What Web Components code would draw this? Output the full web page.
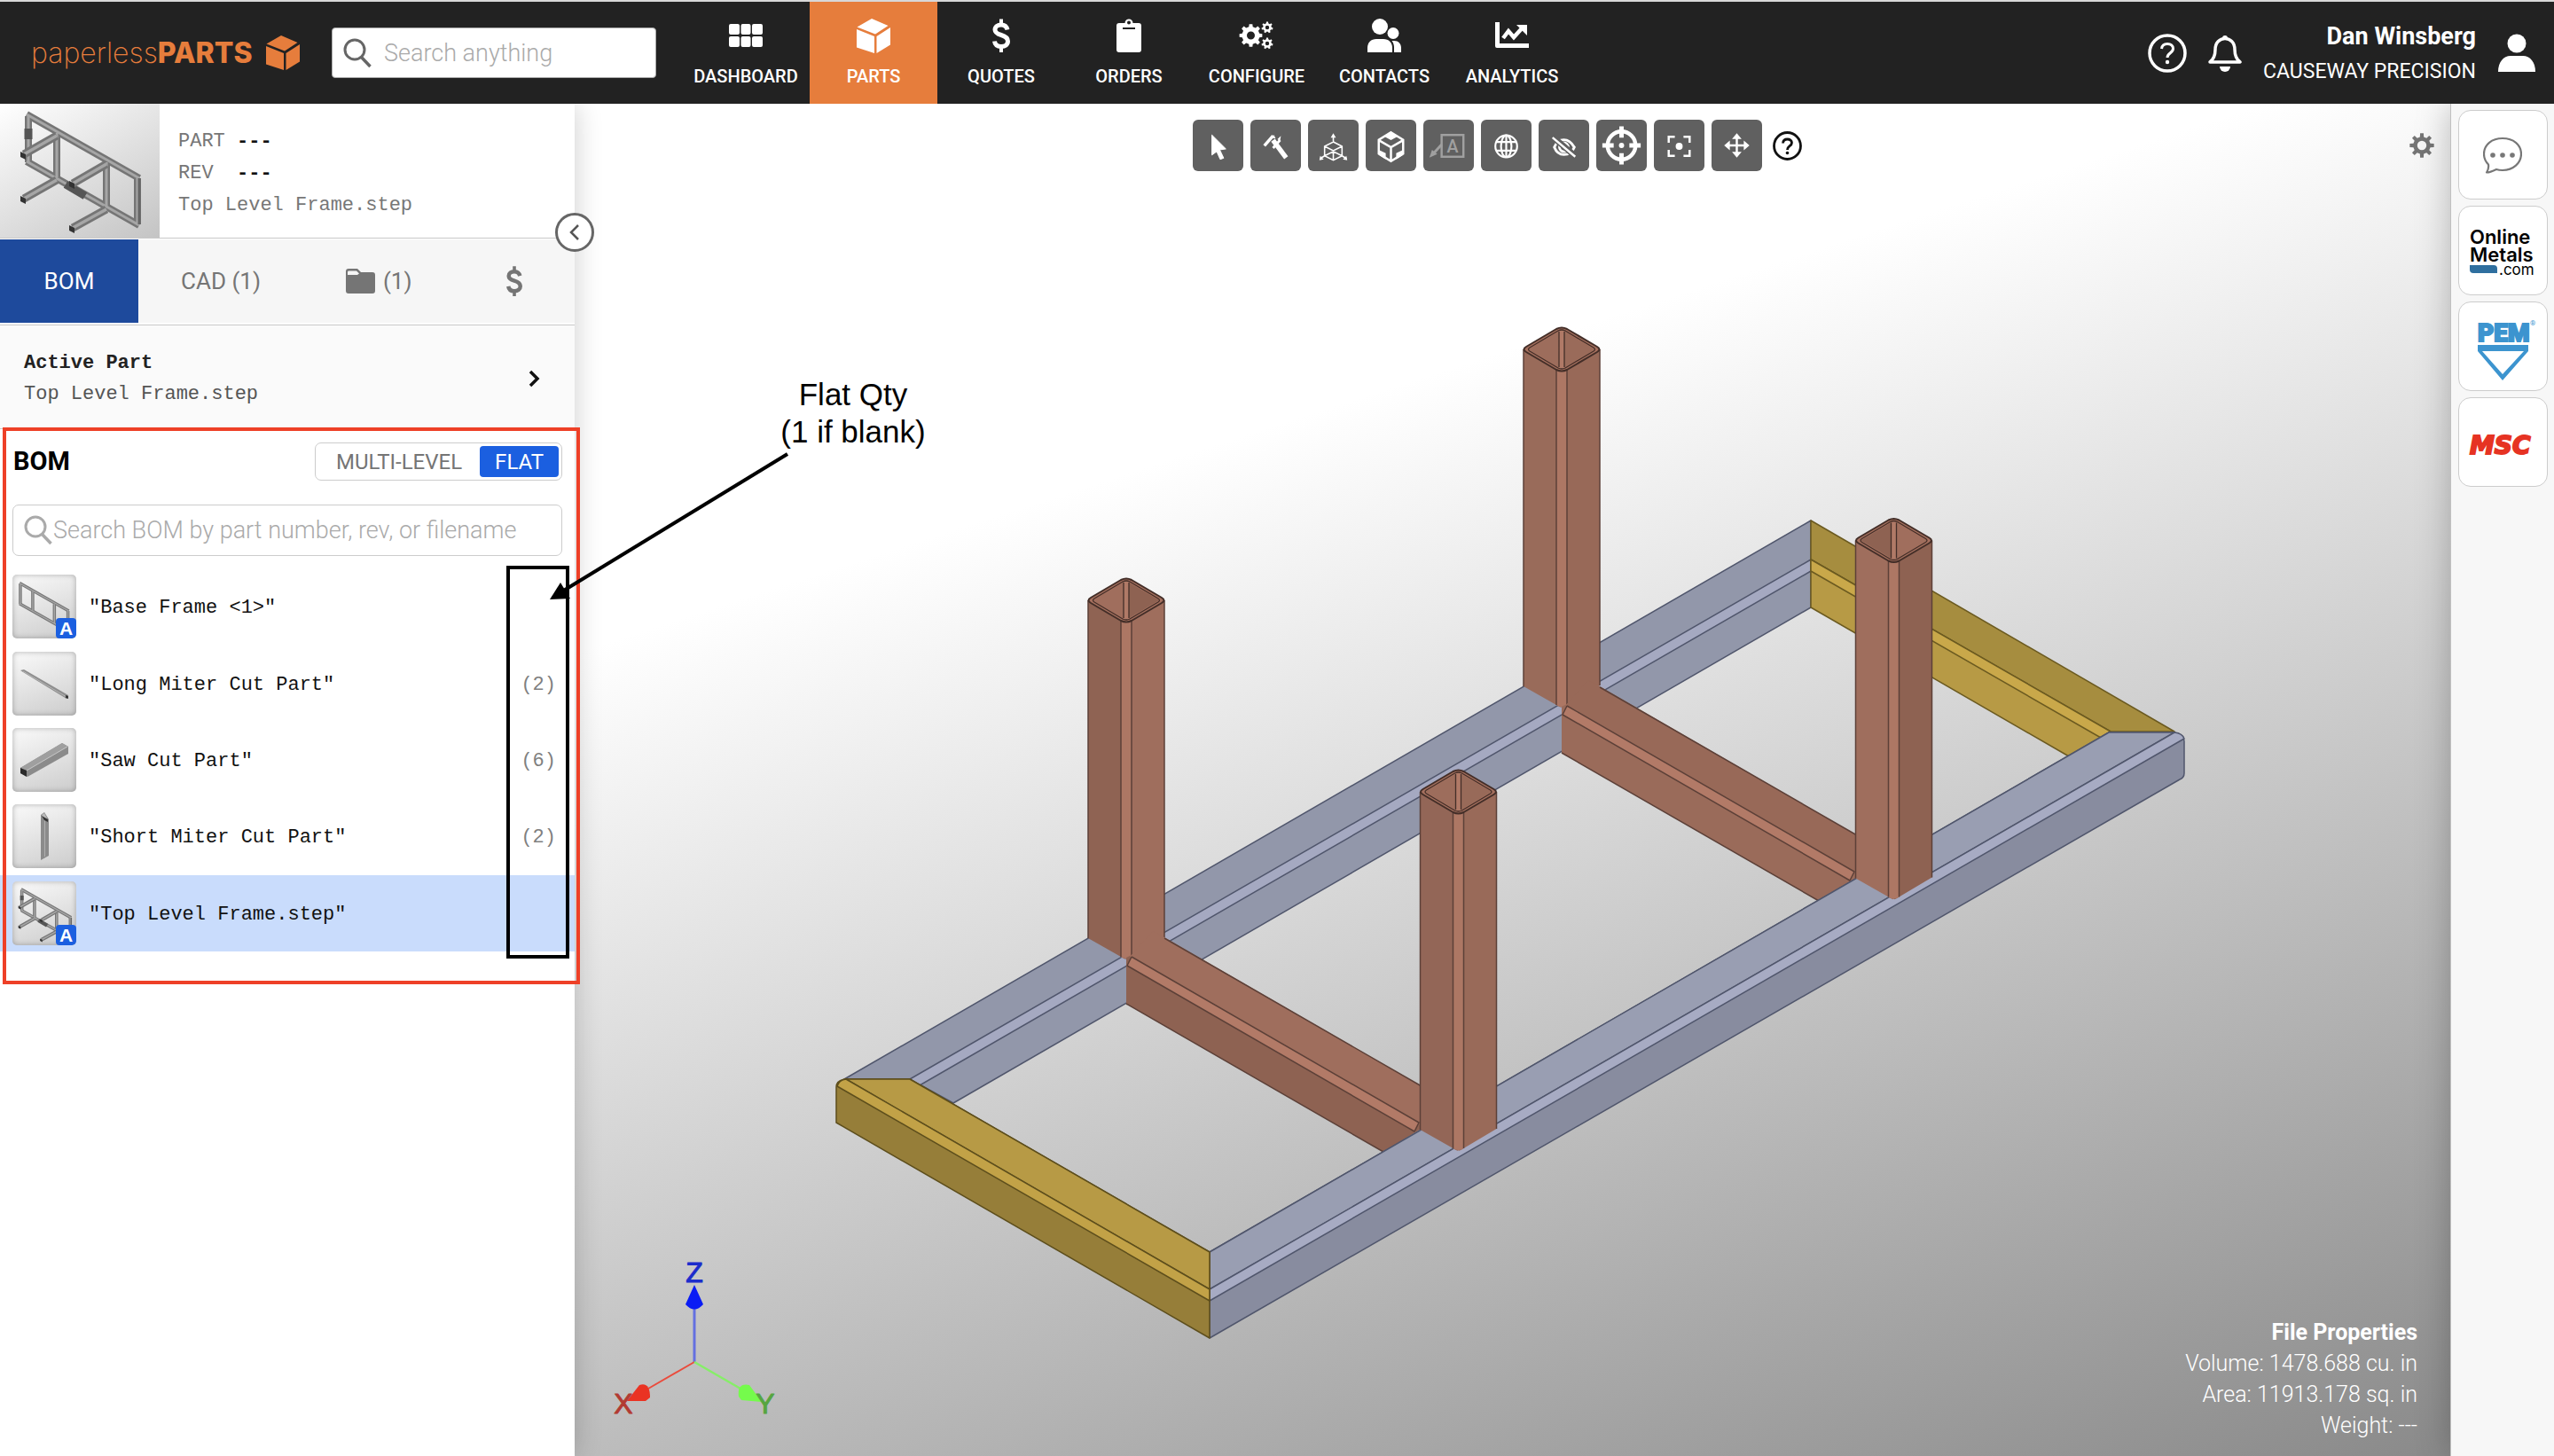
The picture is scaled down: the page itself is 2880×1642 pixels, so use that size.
<!DOCTYPE html>
<html lang="en">
<head>
<meta charset="utf-8">
<title>Paperless Parts</title>
<style>
html,body{margin:0;padding:0;height:100%}
body{font-family:Roboto,"Liberation Sans",sans-serif;font-size:26px;color:#222;background:#fff;overflow:hidden}
</style>
</head>
<body>
<pp-app></pp-app>
<script>
const base = `*{box-sizing:border-box}button,input{font:inherit;color:inherit;margin:0;border:0;padding:0;background:none}a{color:inherit;text-decoration:none}svg{display:block}`;
function define(name, html, setup) {
  const t = document.createElement('template');
  customElements.define(name, class extends HTMLElement {
    connectedCallback() {
      if (this.shadowRoot) return;
      t.innerHTML = `<style>${base}</style>` + (typeof html === 'function' ? html(this) : html);
      this.attachShadow({mode: 'open'}).append(t.content.cloneNode(true));
      if (setup) setup(this);
    }
  });
}
function gear(cx, cy, ro, ri, hole, n) {
  let d = '';
  const step = Math.PI * 2 / n;
  const p = (r, a) => (cx + r * Math.sin(a)).toFixed(2) + ' ' + (cy - r * Math.cos(a)).toFixed(2);
  for (let i = 0; i < n; i++) {
    const a = i * step;
    d += (i ? 'L' : 'M') + p(ri, a - step * .28) + 'L' + p(ro, a - step * .18) + 'L' + p(ro, a + step * .18) + 'L' + p(ri, a + step * .28);
  }
  return `<path fill-rule="evenodd" d="${d}ZM${cx - hole} ${cy}a${hole} ${hole} 0 1 0 ${2 * hole} 0a${hole} ${hole} 0 1 0 ${-2 * hole} 0Z"/>`;
}
const box = '<path d="M1.500 10.500 18 1l18.500 8L22 18.500zM1 13l20 8v19L1 33.500zM39 11v19.500L23.500 40V21z"/>';
const dollar = '<path d="M27 13.500C26 9.500 23.500 8 20 8c-4 0-7 2-7 5.500C13 17 16 18.300 20 19.500s7.500 3 7.500 7c0 3.800-3 6-7.500 6-4.200 0-7-2-7.500-6" fill="none" stroke="currentColor" stroke-width="5"/><path d="M18 1.500h4v8h-4zM18 31h4v8h-4z"/>';
const icons = {
  dashboard: '<path d="M3 7h8a2 2 0 0 1 2 2v8a2 2 0 0 1-2 2H3a2 2 0 0 1-2-2V9a2 2 0 0 1 2-2zm13.500 0h7a2 2 0 0 1 2 2v8a2 2 0 0 1-2 2h-7a2 2 0 0 1-2-2V9a2 2 0 0 1 2-2zm12.500 0h8a2 2 0 0 1 2 2v8a2 2 0 0 1-2 2h-8a2 2 0 0 1-2-2V9a2 2 0 0 1 2-2zM3 21h8a2 2 0 0 1 2 2v8a2 2 0 0 1-2 2H3a2 2 0 0 1-2-2v-8a2 2 0 0 1 2-2zm13.500 0h7a2 2 0 0 1 2 2v8a2 2 0 0 1-2 2h-7a2 2 0 0 1-2-2v-8a2 2 0 0 1 2-2zM29 21h8a2 2 0 0 1 2 2v8a2 2 0 0 1-2 2h-8a2 2 0 0 1-2-2v-8a2 2 0 0 1 2-2z"/>',
  parts: box,
  quotes: dollar,
  orders: '<path fill-rule="evenodd" d="M9 6h6.500a4.500 4.500 0 0 1 9 0H31a3 3 0 0 1 3 3v27a3 3 0 0 1-3 3H9a3 3 0 0 1-3-3V9a3 3 0 0 1 3-3zm4 5v2h14v-2zM20 3.500a2 2 0 1 0 0 4 2 2 0 0 0 0-4z"/>',
  configure: gear(13.5, 20, 13, 10, 4.5, 8) + gear(32, 11, 6.5, 4.8, 2.2, 7) + gear(32, 29, 6.5, 4.8, 2.2, 7),
  contacts: '<ellipse cx="15" cy="10" rx="9" ry="9"/><path d="M1 39v-5c0-6 4-10 10-10h8c6 0 10 4 10 10v5z"/><circle cx="30" cy="17.500" r="6.500"/><path d="M31 39v-6c0-2.500-1-5-2.500-7H31c5 0 8 3.500 8 8v5z"/>',
  analytics: '<path d="M1 5h5v24h33v5H3a2 2 0 0 1-2-2z"/><path d="m10 23 6-8 6 7 10-11" fill="none" stroke="currentColor" stroke-width="4.500"/><path d="M25 8h12v12z"/>'
};
const search = c => `<svg width="32" height="34" viewBox="0 0 32 34" fill="none" stroke="${c}" stroke-width="3"><circle cx="13" cy="13" r="11"/><path d="m20.500 21.500 10 10.500" stroke-width="3.500"/></svg>`;

define('pp-nav-item', el => `<style>
:host{display:block;width:144px}
a{display:flex;flex-direction:column;align-items:center;gap:14px;height:115px;padding-top:18px;color:#fff;font-size:20px;line-height:24px;font-weight:500}
:host([active]) a{background:#e67d3c}
</style><a href="#${el.getAttribute('icon')}"><svg width="40" height="40" viewBox="0 0 40 40" fill="currentColor" aria-hidden="true">${icons[el.getAttribute('icon')]}</svg><slot></slot></a>`);

define('pp-header', `<style>
:host{display:flex;align-items:center;background:#222;border-top:2px solid #d8d8d8;height:117px;color:#fff;padding:0 20px 0 35px}
.logo{display:flex;align-items:center;justify-content:space-between;color:#e67d3c;font-family:Inter,sans-serif;font-size:32px;line-height:40px;font-weight:200;width:304px}
.logo b{font-weight:800}
.logo .word{white-space:nowrap}
label{display:flex;align-items:center;gap:14px;width:366px;height:57px;margin-left:35px;background:#fff;border:1px solid #aaa;border-radius:4px;padding:0 12px}
input{flex:1;min-width:0;font-size:27px;font-weight:300;outline:0;color:#333}
input::placeholder{color:#aaa;opacity:1}
nav{display:flex;margin-left:29px;flex:1}
.user{display:flex;align-items:center;gap:24px}
.who{text-align:right;display:flex;flex-direction:column;font-size:23px;line-height:40px;padding-top:3px}
.who b{font-size:27px;font-weight:700}
</style>
<a class="logo" href="#home"><span class="word">paperless<b>PARTS</b></span><svg width="40" height="41" viewBox="0 0 40 41" fill="currentColor">${box}</svg></a>
<label aria-label="Search anything">${search('#666')}<input type="search" placeholder="Search anything"></label>
<nav><pp-nav-item icon="dashboard">DASHBOARD</pp-nav-item><pp-nav-item icon="parts" active>PARTS</pp-nav-item><pp-nav-item icon="quotes">QUOTES</pp-nav-item><pp-nav-item icon="orders">ORDERS</pp-nav-item><pp-nav-item icon="configure">CONFIGURE</pp-nav-item><pp-nav-item icon="contacts">CONTACTS</pp-nav-item><pp-nav-item icon="analytics">ANALYTICS</pp-nav-item></nav>
<div class="user">
<button aria-label="Help"><svg width="44" height="44" viewBox="0 0 44 44" fill="none" stroke="#fff" stroke-width="3.500"><circle cx="22" cy="22" r="20"/><path d="M15.500 17c.5-4 3-5.500 6.500-5.500 4 0 6.500 2.200 6.500 5.300 0 5.200-6.500 4.700-6.500 10.200" stroke-width="3"/><circle cx="22" cy="32" r="2.200" fill="#fff" stroke="none"/></svg></button>
<button aria-label="Notifications"><svg width="38" height="44" viewBox="0 0 38 44" fill="none" stroke="#fff" stroke-width="3.500" stroke-linejoin="round"><path d="M2 32c4-3 6-7 6-14 0-8 5-12.500 11-12.500S30 10 30 18c0 7 2 11 6 14z"/><path d="M16 5a3 3 0 0 1 6 0z" fill="#fff" stroke="none"/><path d="M13 37h12a6 6 0 0 1-12 0z" fill="#fff" stroke="none"/></svg></button>
<div class="who"><b>Dan Winsberg</b><span>CAUSEWAY PRECISION</span></div>
<button aria-label="Account"><svg width="44" height="44" viewBox="0 0 44 44" fill="#fff"><circle cx="22" cy="11" r="10.500"/><path d="M1 43c0-11 6-18 14-18h14c8 0 14 7 14 18z"/></svg></button>
</div>`);

/* Isometric drawings of the parts, one per thumbnail kind */
const tube = (pts, w) => pts.map(p => `<path d="M${p}" stroke="#757575" stroke-width="${w}" fill="none"/>`).join('') + pts.map(p => `<path d="M${p}" stroke="#a6a6a6" stroke-width="${w / 2.6}" fill="none"/>`).join('');
const frame = ['32 14V66', '155 84v52', '64 33v50', '120 66v50', '30 12l127 72', '30 65l127 72'];
const legs = ['64 36 27 57', '120 68 82 90', '64 86 27 107', '120 119 82 140'];
const ends = '<path d="M23 54l6 3v6l-6-3zM78 87l6 3v6l-6-3zM23 104l6 3v6l-6-3zM78 137l6 3v6l-6-3z" fill="#333"/>';
const topFrame = tube(frame, 8) + '<path d="M32 28v12M74 91l22 13" stroke="#555" stroke-width="9"/><path d="M157 84v52" stroke="#666" stroke-width="3"/>' + tube(legs, 9) + ends;
const drawings = {
  base: `<svg viewBox="14 -10 160 165">${tube(frame, 8)}</svg>`,
  long: '<svg viewBox="0 0 72 72"><path d="m9 21 4-1 50 29v3l-2 1L12 23z" fill="#8e8e8e"/><path d="m12 22 49 29" stroke="#b5b5b5"/><path d="m60 49 3 1v3l-3-1z" fill="#333"/></svg>',
  saw: '<svg viewBox="0 0 72 72"><path d="m9 45 47-28 7 4v8L17 55l-8-4z" fill="#8b8b8b"/><path d="m9 45 47-28 7 4-46 27z" fill="#9f9f9f"/><path d="M16 48 62 21" stroke="#c4c4c4"/><path d="m9 45 7 3v7l-7-4z" fill="#2b2b2b"/></svg>',
  short: '<svg viewBox="0 0 72 72"><path d="m32 12 4-3 5 8v41l-9 5z" fill="#8b8b8b"/><path d="M36.500 18v41" stroke="#b0b0b0"/><path d="m33 12 3-2 4 8-5-3z" fill="#bbb"/><path d="m33 13 7 4v3l-4-2z" fill="#333"/></svg>',
  top: `<svg viewBox="8 -8 162 162">${topFrame}</svg>`
};

define('pp-bom-row', el => `<style>
:host{display:block}
button{display:flex;align-items:center;gap:14px;width:100%;height:100%;padding:0 21px 0 14px;text-align:left;font-family:"Liberation Mono",monospace;font-size:22px;line-height:30px;color:#111}
:host([selected]) button{background:#c9dcfc}
.thumb{position:relative;width:72px;height:72px;border-radius:5px;background:linear-gradient(160deg,#fafafa,#ccc);box-shadow:inset 0 0 6px rgba(0,0,0,.28);overflow:hidden}
.thumb svg{width:72px;height:72px}
.badge{position:absolute;right:0;bottom:0;width:23px;height:23px;border-radius:4px;background:#1b5fe0;color:#fff;font:700 21px/23px "Liberation Sans",sans-serif;text-align:center}
.name,.qty{padding-top:4px}
.name{flex:1;white-space:nowrap}
.qty{color:#808080}
</style><button><span class="thumb">${drawings[el.getAttribute('kind')]}${el.hasAttribute('assembly') ? '<span class="badge">A</span>' : ''}</span><span class="name"><slot></slot></span><span class="qty"><slot name="qty"></slot></span></button>`);

define('pp-sidebar', `<style>
:host{display:flex;flex-direction:column;position:relative;background:#fff;box-shadow:0 0 30px rgba(0,0,0,.2);z-index:1}
.mono{font-family:"Liberation Mono",monospace;font-size:22px}
.part{display:flex;height:152px;border-bottom:1px solid #c8c8c8}
.pic{width:180px;background:linear-gradient(150deg,#fff,#c4c4c4)}
.info{padding:25px 0 0 21px;color:#777;line-height:36px}
.info b{color:#111}
.info div{white-space:pre}
.tabs{display:flex;height:98px;padding:1px 0 2px;border-bottom:1px solid #c8c8c8}
.tabs button{display:flex;flex:0 0 auto;align-items:center;justify-content:center;gap:9px;background:#f6f6f6;color:#757575;padding:0 48px;font-size:26px}
.tabs button.on{width:156px;background:#1e4a9c;color:#fff}
.tabs button:last-child{flex:1}
.active{display:flex;align-items:center;justify-content:space-between;width:100%;height:117px;padding:4px 38px 0 27px;background:#fafafa;border-bottom:1px solid #ccc;text-align:left;line-height:35px;color:#555}
.active b,.active span{display:block}
.active b{color:#222}
.head{display:flex;align-items:center;justify-content:space-between;padding:15px 14px 0 15px}
h2{margin:0;font-size:29px;line-height:43px;font-weight:700;color:#000}
.toggle{display:flex;border:1px solid #ccc;border-radius:7px;height:43px;padding:3px;font-size:24px;line-height:34px}
.toggle button{padding:0 20px;color:#757575;border-radius:4px}
.toggle button.on{padding:0 17px;background:#1b5fe0;color:#fff}
.find{display:flex;align-items:center;gap:1px;height:58px;margin:27px 14px 14px 14px;padding:0 12px;border:1px solid #ccc;border-radius:7px}
.find input{flex:1;min-width:0;font-size:27px;font-weight:300;outline:0}
.find input::placeholder{color:#aaa;opacity:1}
.list{display:grid;grid-auto-rows:1fr;min-height:432px}
.collapse{position:absolute;right:-22px;top:123px;width:44px;height:44px;border:3px solid #666;border-radius:50%;background:#fff;display:grid;place-items:center}
</style>
<section class="part"><svg class="pic" width="180" height="151" viewBox="0 0 180 151">${topFrame}</svg>
<div class="info mono"><div>PART <b>---</b></div><div>REV  <b>---</b></div><div>Top Level Frame.step</div></div></section>
<div class="tabs"><button class="on">BOM</button><button>CAD (1)</button><button aria-label="Files"><svg width="33" height="30" viewBox="0 0 33 30" fill="#757575"><path d="M3 1h10l4 4h13a3 3 0 0 1 3 3v18a3 3 0 0 1-3 3H3a3 3 0 0 1-3-3V4a3 3 0 0 1 3-3z"/><path d="M2 5c0-1 .5-1.500 1.500-1.500H12l3 3L13 8H2z" fill="#f6f6f6"/></svg><span>(1)</span></button><button aria-label="Pricing"><svg width="36" height="36" viewBox="0 0 40 40" fill="currentColor">${dollar}</svg></button></div>
<button class="active mono"><span><b>Active Part</b><span>Top Level Frame.step</span></span><svg width="14" height="20" viewBox="0 0 14 20" fill="none" stroke="#111" stroke-width="3.500"><path d="m2 2 8 8-8 8"/></svg></button>
<div class="head"><h2>BOM</h2><div class="toggle"><button>MULTI-LEVEL</button><button class="on">FLAT</button></div></div>
<label class="find" aria-label="Search BOM">${search('#aaa')}<input type="search" placeholder="Search BOM by part number, rev, or filename"></label>
<div class="list"><pp-bom-row kind="base" assembly>"Base Frame &lt;1&gt;"</pp-bom-row><pp-bom-row kind="long">"Long Miter Cut Part"<span slot="qty">(2)</span></pp-bom-row><pp-bom-row kind="saw">"Saw Cut Part"<span slot="qty">(6)</span></pp-bom-row><pp-bom-row kind="short">"Short Miter Cut Part"<span slot="qty">(2)</span></pp-bom-row><pp-bom-row kind="top" assembly selected>"Top Level Frame.step"</pp-bom-row></div>
<button class="collapse" aria-label="Collapse panel"><svg width="12" height="20" viewBox="0 0 12 20" fill="none" stroke="#555" stroke-width="2.500"><path d="m10 2-8 8 8 8"/></svg></button>`);

const tools = {
  'Select': '<path d="m22 17 16 16-7 1 4.500 9.500-4 1.500-4-9L22 40z" fill="#fff"/>',
  'Measure': '<path d="m26 23 15 20" stroke-width="5.500"/><path d="m26 18-10 11.500" stroke-width="3.500"/><path d="m34 23-8 9" stroke-width="3"/><path d="m22 20 5-3 2 4zM31 22l4-4-1 6z" fill="#fff" stroke="none"/>',
  'Section': '<path d="m29 25 10 5v11l-10 5-10-5V30zM19 30l10 5 10-5M29 35v11M29 25V18M19 41l-5 3M39 41l5 3M19 41l10-5 10 5" stroke-width="1.600"/><path d="m29 15 3 5h-6zM13 46l1-5 4 4zM45 46l-1-5-4 4z" fill="#fff" stroke="none"/>',
  'View cube': '<path d="m29 14 14 8.500v16L29 47l-14-8.500v-16z" stroke-width="2.500"/><path d="m15 23 14 8 14-8M29 31v16" stroke-width="2.500"/><path d="m29 14 7 5-7 4-7-4zM15 34l8 4v7l-8-5zM43 34l-8 4v7l8-5z" fill="#fff" stroke="none"/>',
  'Annotate': '<g stroke="#a0a0a0"><rect x="21" y="17" width="25" height="25" stroke-width="2.500"/><path d="m21 28-10 11" stroke-width="3"/></g><path d="m7 43 3-9 6 5z" fill="#a0a0a0" stroke="none"/><text x="33.500" y="37" font-family="Roboto,sans-serif" font-size="20" font-weight="500" text-anchor="middle" fill="#a0a0a0" stroke="none">A</text>',
  'World': '<g stroke-width="2.200"><circle cx="29" cy="30" r="12.500"/><ellipse cx="29" cy="30" rx="6" ry="12.500"/><path d="M18 25h22M18 35h22M29 18v24"/></g>',
  'Hide': '<path d="M18 31c2-5 6-8.500 11-8.500S38 26 41 31c-2 5-6 8.500-12 8.500S20 36 18 31z" stroke-width="3"/><circle cx="29" cy="31" r="5" stroke-width="3"/><path d="m16 19 27 23" stroke="#606060" stroke-width="7"/><path d="m16 20 26 22" stroke-width="2.500"/>',
  'Target': '<circle cx="29" cy="29" r="16" stroke-width="4.500"/><path d="M29 7v13M29 38v13M7 29h13M38 29h13" stroke-width="5"/><circle cx="29" cy="29" r="3" fill="#fff" stroke="none"/>',
  'Focus': '<path d="M17 26v-7h7M34 19h7v7M41 34v7h-7M24 41h-7v-7" stroke-width="2.500"/><circle cx="29" cy="30" r="4" fill="#fff" stroke="none"/>',
  'Pan': '<path d="M29 20v19M19.500 29h19" stroke-width="2.500"/><path d="m29 15 5.500 6.500h-11zM29 43l5.500-6.500h-11zM14.500 29l6.500-5.500v11zM43.500 29 37 23.500v11z" fill="#fff" stroke="none"/>'
};
define('pp-tool', el => `<style>:host{display:block}button{display:block;width:57px;height:58px;border-radius:6px;background:#606060}</style>
<button aria-label="${el.title}"><svg width="57" height="58" viewBox="0 0 58 58" fill="none" stroke="#fff">${tools[el.title]}</svg></button>`);

/* One upright post with its open tube end; dx,dy is the rear apex of the opening */
function post(dx, dy, h, left, right, inL, inR) {
  return `<g transform="translate(${dx} ${dy})" stroke-linejoin="round">
<path d="M-43 25v${h}L-6 ${h + 46}Q0 ${h + 50} 0 ${h + 48}V50z" fill="${left}"/><path d="M43 25v${h - 1}L6 ${h + 46}Q0 ${h + 50} 0 ${h + 48}V50z" fill="${right}"/>
<path d="M-6 47V${h + 46}Q0 ${h + 50} 6 ${h + 46}V47z" fill="#ad7764"/>
<path d="M-43 25v${h}M43 25v${h - 1}M-6 48V${h + 46}M6 48V${h + 46}" stroke="#5c4038" stroke-width="1.500" fill="none"/>
<path d="M-6 2Q0-1 6 2L40 22Q45 25 40 28L6 48Q0 51-6 48L-40 28Q-45 25-40 22z" fill="#a5705e" stroke="#432e28" stroke-width="2"/>
<path d="M-37 25-3 5V45z" fill="${inL}"/><path d="M37 25 3 5V45z" fill="${inR}"/><path d="M-3 4h6v42h-6z" fill="#b07a67"/>
<path d="M-4 4Q0 2 4 4L36 23Q39 25 36 27L4 46Q0 48-4 46L-36 27Q-39 25-36 23zM-3 5v40M3 5v40" fill="none" stroke="#432e28" stroke-width="1.300"/></g>`;
}
function crossTube(dx, dy, top, side) {
  return `<g transform="translate(${dx} ${dy})"><path d="M1270 1080 1313 1058 1601 1224V1274L1560 1299 1270 1132z" fill="${side}"/>
<path d="M1274 1079 1300 1050 1313 1057 1603 1225V1270z" fill="${top}"/><path d="M1276 1079 1600 1266 1595 1276 1271 1089z" fill="#b27a67"/>
<path d="M1313 1058 1603 1225M1276 1079 1600 1266 1595 1276 1271 1089 1276 1079M1270 1132 1560 1299" fill="none" stroke="#5c4038" stroke-width="1.500"/></g>`;
}
define('pp-model', `<style>:host{display:block}svg{width:100%;height:100%}</style>
<svg viewBox="648 117 2115 1525" role="img" aria-label="Top Level Frame model" stroke-linejoin="round">
<g stroke="#50566c" stroke-width="1.500"><path d="M952 1217 2042 587V685L1075 1244 1026 1217z" fill="#9297aa"/><path d="M1026 1217 2042 631V644L1037 1224z" fill="#a5a9c1"/></g>
<g stroke="#6b5a20" stroke-width="1.500"><path d="M2042 587 2452 825H2380L2042 631z" fill="#a68d3f"/><path d="M2042 631 2380 826 2333 853 2042 685z" fill="#b79a45"/><path d="M2042 631 2380 825 2369 832 2042 644z" fill="#c9a84a"/></g>
${post(1761, 369, 380, '#996b5a', '#986958', '#9d6d5c', '#9a6b5a')}
${crossTube(491, -283, '#986958', '#9a6b5a')}
${post(1270, 652, 381, '#8f6353', '#9f6e5d', '#a06e5d', '#8e6252')}
${crossTube(0, 0, '#9f6e5d', '#8e6252')}
<path d="M1364 1412 2378 826H2452Q2463 828 2463 836V872Q2463 877 2458 879L1364 1509z" fill="#888c9f" stroke="#50566c" stroke-width="1.500"/>
<path d="M1364 1412 2378 826H2452L1364 1454z" fill="#999eb2" stroke="#50566c" stroke-width="1.500"/>
<path d="M1364 1454 2452 826Q2461 827 2463 833L1364 1467z" fill="#a7abc3" stroke="#50566c" stroke-width="1.500"/>
<path d="M952 1217H1026L1364 1412V1509L943 1266V1226Q943 1219 952 1217z" fill="#967e39" stroke="#5d4e1c" stroke-width="1.500"/>
<path d="M954 1217H1026L1364 1412V1454z" fill="#b79a45" stroke="#5d4e1c" stroke-width="1.500"/>
<path d="M954 1217Q946 1218 944 1225L1364 1467V1454z" fill="#c2a247" stroke="#5d4e1c" stroke-width="1.500"/>
${post(2135.5, 584.5, 381, '#9f6e5d', '#8e6252', '#8e6252', '#a06e5d')}
${post(1644.5, 868, 381, '#936657', '#996a59', '#9d6d5c', '#986a59')}
<g font-family="Liberation Sans,sans-serif" font-size="32" text-anchor="middle">
<path d="M783 1536v-62" stroke="#6470e0" stroke-width="3"/><path d="m783 1449 10 22q-10 11-20 0z" fill="#0a1cf5"/><text x="783" y="1446" fill="#1c2ccc" stroke="#1c2ccc">Z</text>
<path d="m783 1536-52 30" stroke="#ea4b3c" stroke-width="2"/><path d="m707 1580 14-18q12-4 12 14l-5 4z" fill="#ea3323"/><text x="703" y="1594" fill="#b23a32" stroke="#b23a32">X</text>
<path d="m783 1536 52 30" stroke="#86ee68" stroke-width="2.500"/><path d="m859 1581-14-19q-14-3-12 13l3 4z" fill="#75fb4c"/><text x="863" y="1594" fill="#56a540" stroke="#56a540">Y</text></g>
</svg>`);

define('pp-viewer', `<style>
:host{display:flex;flex-direction:column;justify-content:space-between;position:relative;background:linear-gradient(162deg,#fff 28%,#8a8a8a 100%);overflow:hidden}
pp-model{position:absolute;inset:0}
.bar{position:relative;display:flex;align-items:center;justify-content:center;gap:8px;padding:18px 34px 0 0}
.help{width:33px;height:33px;margin-left:4px}
.gear{position:absolute;right:18px;top:33px;width:28px;height:28px}
.props{position:relative;align-self:flex-end;text-align:right;color:#fff;font-size:25px;line-height:35px;font-weight:300;padding:0 37px 17px 0}
.props b{font-weight:700}
.props div{white-space:nowrap}
</style><pp-model></pp-model>
<div class="bar">${Object.keys(tools).map(t => `<pp-tool title="${t}"></pp-tool>`).join('')}
<button class="help" aria-label="Viewer help"><svg width="33" height="33" viewBox="0 0 33 33" fill="none" stroke="#111" stroke-width="2.800"><circle cx="16.500" cy="16.500" r="15"/><path d="M11.500 13.500c.3-3.500 2.500-4.500 5-4.500 3 0 5 1.700 5 4 0 4-5 3.500-5 8"/><circle cx="16.500" cy="24.500" r="1.800" fill="#111" stroke="none"/></svg></button></div>
<button class="gear" aria-label="Settings"><svg width="28" height="28" viewBox="0 0 28 28" fill="#757575">${gear(14, 14, 13.8, 9.8, 5.2, 8)}</svg></button>
<div class="props"><div><b>File Properties</b></div><div>Volume: 1478.688 cu. in</div><div>Area: 11913.178 sq. in</div><div>Weight: ---</div></div>`);

define('pp-rail', `<style>
:host{display:flex;flex-direction:column;align-items:center;gap:7px;padding-top:7px;background:#f7f7f7;border-left:1px solid #c0c0c0;box-shadow:0 0 36px rgba(0,0,0,.25);z-index:1}
button{display:grid;place-items:center;width:101px;height:101px;background:#fff;border:1px solid #ccc;border-radius:14px}
.om{display:grid;width:74px;color:#000;font-family:Inter,sans-serif;font-weight:600;font-size:22px;line-height:20px;text-align:left;padding-top:2px}
.om .tail{display:flex;align-items:center;gap:2px;line-height:14px;font-size:17px;font-weight:400}
.om i{width:31px;height:9px;background:#2f6f9f;border-radius:0 4px 0 4px}
</style>
<button aria-label="Chat"><svg width="44" height="44" viewBox="0 0 44 44" fill="none" stroke="#777" stroke-width="2.200" stroke-linejoin="round"><path d="M22 3c12 0 21 7 21 17.500S34 39 22 39c-3 0-5-.3-7-1-3 1.500-7 3.500-11 3.500 2-3 2.500-6 2-9-3-3-5-7-5-12C1 10 10 3 22 3z"/><g fill="#777" stroke="none"><circle cx="11" cy="22" r="2.800"/><circle cx="22" cy="22" r="2.800"/><circle cx="33" cy="22" r="2.800"/></g></svg></button>
<button aria-label="OnlineMetals.com"><span class="om"><span>Online</span><span>Metals</span><span class="tail"><i></i>.com</span></span></button>
<button aria-label="PEM"><svg width="80" height="84" viewBox="-8 -7 80 84" fill="#3c94cf" font-family="Roboto,sans-serif"><text x="4" y="29" font-size="28" font-weight="900" stroke="#3c94cf" stroke-width="2">PEM</text><text x="63" y="11" font-size="8">®</text><path fill-rule="evenodd" d="M4 33h57v7L32 73 4 40zm5 7 23 26 24-26z"/></svg></button>
<button aria-label="MSC"><svg width="84" height="50" viewBox="-4 -4 84 50"><text x="1" y="34" font-family="DejaVu Sans,sans-serif" font-size="28" font-weight="700" font-style="italic" fill="#e63323" stroke="#e63323" stroke-width="2">MSC</text></svg></button>`);

/* Callouts drawn over the page */
define('pp-callouts', `<style>
:host{position:absolute;inset:0;pointer-events:none;z-index:2}
.panel,.column,p,svg{position:absolute}
.panel{left:3px;top:482px;width:651px;height:628px;border:4px solid #ee4027}
.column{left:571px;top:638px;width:71px;height:443px;border:4px solid #000}
p{left:862px;top:424px;width:200px;margin:0;text-align:center;font-family:"Liberation Sans",sans-serif;font-size:35px;line-height:42px;color:#000}
svg{left:610px;top:500px}
</style><div class="panel"></div><div class="column"></div><p>Flat Qty<br>(1 if blank)</p>
<svg width="290" height="190" viewBox="610 500 290 190"><path d="M888 512 634 667" stroke="#000" stroke-width="4"/><path d="m620 676 12-19 11 18z"/></svg>`);

define('pp-app', `<style>
:host{display:grid;position:relative;grid-template:117px 1fr / 648px 1fr 117px;height:100vh;overflow:hidden}
pp-header{grid-column:1/-1;position:relative;z-index:2}
</style><pp-header></pp-header><pp-sidebar></pp-sidebar><pp-viewer></pp-viewer><pp-rail></pp-rail><pp-callouts></pp-callouts>`);
</script>
</body>
</html>
